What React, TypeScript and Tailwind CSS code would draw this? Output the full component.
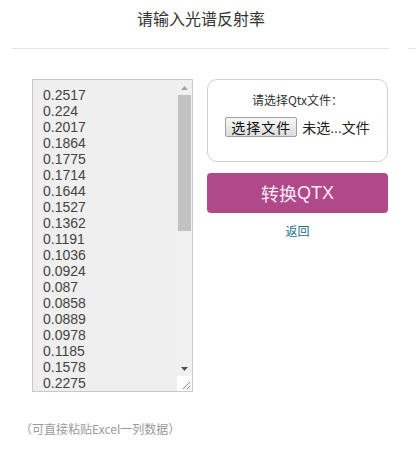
import React from 'react';

const values = [
  '0.2517', '0.224', '0.2017', '0.1864', '0.1775', '0.1714', '0.1644', '0.1527',
  '0.1362', '0.1191', '0.1036', '0.0924', '0.087', '0.0858', '0.0889', '0.0978',
  '0.1185', '0.1578', '0.2275',
];

const cjk = { fontFamily: '"Noto Sans CJK SC", "Liberation Sans", sans-serif' };
const latin = { fontFamily: '"Liberation Sans", Arial, sans-serif' };

function FakeTextarea() {
  return (
    <div className="flex w-[161px] h-[313px] border border-[#c8c8c8] bg-[#efefef] overflow-hidden">
      <div className="flex-1 pl-[10px] pt-[7px] text-[14px] leading-[16px] text-[#444]" style={latin}>
        {values.map((v, i) => (
          <div key={i}>{v}</div>
        ))}
      </div>
      <div className="flex flex-col w-[15px] bg-[#f0f0f0]">
        <div className="h-[15px] flex items-center justify-center">
          <svg width="7" height="4" viewBox="0 0 7 4">
            <path d="M0 4 L3.5 0 L7 4 Z" fill="#a3a3a3" />
          </svg>
        </div>
        <div className="h-[136px] mx-[1px] bg-[#c2c2c2]" />
        <div className="flex-1" />
        <div className="h-[15px] flex items-center justify-center">
          <svg width="7" height="4" viewBox="0 0 7 4">
            <path d="M0 0 L7 0 L3.5 4 Z" fill="#505050" />
          </svg>
        </div>
        <div className="h-[15px] bg-white flex items-end justify-end p-[2px]">
          <svg width="8" height="8" viewBox="0 0 8 8">
            <path d="M8 1 L1 8 M8 5 L5 8" stroke="#888" strokeWidth="1" />
          </svg>
        </div>
      </div>
    </div>
  );
}

export default function App() {
  return (
    <div className="w-[416px] h-[466px] bg-white overflow-hidden" style={cjk}>
      <div className="w-[402px] pt-[8px] text-center text-[16px] leading-[20px] text-[#333]">
        请输入光谱反射率
      </div>
      <div className="flex mt-[20px]">
        <div className="ml-[12px] w-[377px] h-px bg-[#e3e3e3]" />
        <div className="ml-[19px] flex-1 h-px bg-[#e3e3e3]" />
      </div>
      <div className="flex mt-[30px] pl-[32px] gap-[14px]">
        <FakeTextarea />
        <div className="flex flex-col w-[181px]">
          <div className="h-[83px] border border-[#d0d0d0] rounded-[10px] flex flex-col items-center pt-[11px]">
            <div className="text-[12px] leading-[18px] text-[#333]">请选择Qtx文件：</div>
            <div className="flex items-center mt-[8px]">
              <div className="h-[20px] px-[5px] border border-[#a0a0a0] rounded-[2px] bg-gradient-to-b from-[#f7f7f7] to-[#dcdcdc] text-[14px] leading-[18px] text-[#111] tracking-[1px]">
                选择文件
              </div>
              <div className="ml-[5px] text-[14px] leading-[18px] text-[#222]">
                未选<span style={latin}>...</span>文件
              </div>
            </div>
          </div>
          <div className="mt-[11px] h-[40px] rounded-[4px] bg-[#b0498a] flex items-center justify-center text-[18px] text-[#fbeaf4]">
            转换<span style={latin}>QTX</span>
          </div>
          <div className="mt-[9px] text-center text-[12px] leading-[18px] text-[#1e6e86]">返回</div>
        </div>
      </div>
      <div className="mt-[28px] pl-[20px] text-[12px] leading-[18px] text-[#9a9a9a]">
        （可直接粘贴Excel一列数据）
      </div>
    </div>
  );
}
